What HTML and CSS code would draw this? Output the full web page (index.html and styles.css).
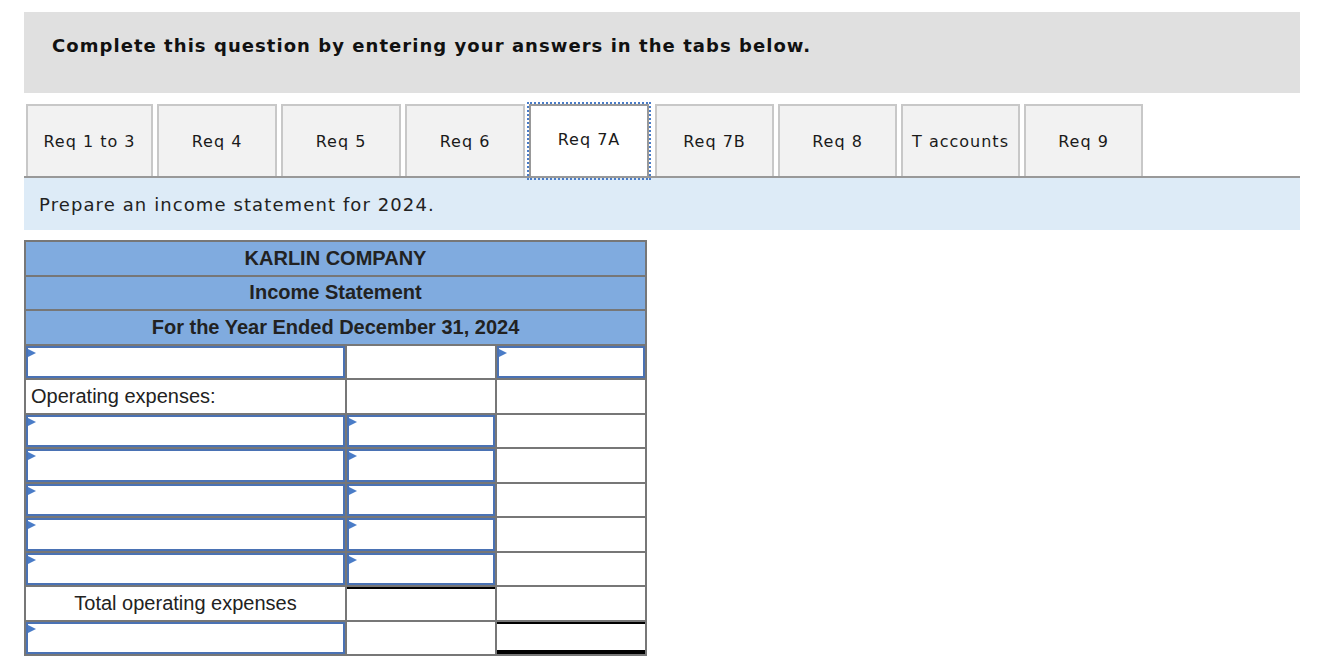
FILE: index.html
```html
<!DOCTYPE html>
<html>
<head>
<meta charset="utf-8">
<link rel="stylesheet" href="styles.css">
</head>
<body>
<div class="page">
  <div class="banner">Complete this question by entering your answers in the tabs below.</div>
  <div class="tabs">
    <div class="tab first">Req 1 to 3</div>
    <div class="tab">Req 4</div>
    <div class="tab">Req 5</div>
    <div class="tab">Req 6</div>
    <div class="tab active">Req 7A</div>
    <div class="tab">Req 7B</div>
    <div class="tab">Req 8</div>
    <div class="tab">T accounts</div>
    <div class="tab">Req 9</div>
  </div>
  <div class="instruction">Prepare an income statement for 2024.</div>
  <div class="sheet">
    <div class="head">KARLIN COMPANY</div>
    <div class="head">Income Statement</div>
    <div class="head">For the Year Ended December 31, 2024</div>

    <div class="cell"><div class="inp"><span class="flag"></span></div></div>
    <div class="cell"></div>
    <div class="cell"><div class="inp"><span class="flag"></span></div></div>

    <div class="cell label">Operating expenses:</div>
    <div class="cell"></div>
    <div class="cell"></div>

    <div class="cell"><div class="inp"><span class="flag"></span></div></div>
    <div class="cell"><div class="inp"><span class="flag"></span></div></div>
    <div class="cell"></div>

    <div class="cell"><div class="inp"><span class="flag"></span></div></div>
    <div class="cell"><div class="inp"><span class="flag"></span></div></div>
    <div class="cell"></div>

    <div class="cell"><div class="inp"><span class="flag"></span></div></div>
    <div class="cell"><div class="inp"><span class="flag"></span></div></div>
    <div class="cell"></div>

    <div class="cell"><div class="inp"><span class="flag"></span></div></div>
    <div class="cell"><div class="inp"><span class="flag"></span></div></div>
    <div class="cell"></div>

    <div class="cell"><div class="inp"><span class="flag"></span></div></div>
    <div class="cell"><div class="inp"><span class="flag"></span></div></div>
    <div class="cell"></div>

    <div class="cell label center">Total operating expenses</div>
    <div class="cell topline"></div>
    <div class="cell"></div>

    <div class="cell"><div class="inp"><span class="flag"></span></div></div>
    <div class="cell"></div>
    <div class="cell topline double"></div>
  </div>
</div>
</body>
</html>
```
FILE: styles.css
```css
html, body {
  margin: 0;
  padding: 0;
  background: #ffffff;
}
.page {
  padding: 12px 32px 0 24px;
  font-family: "DejaVu Sans", Verdana, sans-serif;
  color: #222222;
}
.banner {
  background: #e0e0e0;
  height: 81px;
  box-sizing: border-box;
  padding: 23px 0 0 28px;
  font-weight: bold;
  font-size: 18px;
  letter-spacing: 1.05px;
  color: #111111;
}
.tabs {
  display: flex;
  margin-top: 11px;
  padding-left: 2px;
  border-bottom: 2px solid #999999;
  height: 72px;
  gap: 4px;
}
.tab {
  box-sizing: border-box;
  width: 120px;
  height: 72px;
  padding: 0 6px;
  border: 2px solid #c8c8c8;
  border-bottom: none;
  background: #f2f2f2;
  display: flex;
  align-items: center;
  justify-content: center;
  font-size: 16px;
  letter-spacing: 1px;
  color: #1a1a1a;
  white-space: nowrap;
}
.tab.first {
  width: 127px;
}
.tab.active {
  background: #ffffff;
  border: 2px solid #999999;
  outline: 2px dotted #4a7cc7;
  margin-right: 2px;
  padding-bottom: 4px;
  height: 74px;
  position: relative;
  z-index: 1;
}
.tab.active ~ .tab {
  width: 119px;
}
.instruction {
  background: #ddebf7;
  height: 52px;
  box-sizing: border-box;
  padding: 16px 0 0 15px;
  font-size: 18px;
  letter-spacing: 1.1px;
  color: #222222;
}
.sheet {
  margin-top: 10px;
  width: 623px;
  box-sizing: border-box;
  background: #777777;
  padding: 2px;
  display: grid;
  grid-template-columns: 319px 148px 148px;
  grid-auto-rows: 32.5px;
  gap: 2px;
  font-family: "Liberation Sans", Arial, sans-serif;
  font-size: 20px;
  color: #222222;
}
.head {
  grid-column: 1 / 4;
  background: #80abdf;
  font-weight: bold;
  display: flex;
  align-items: center;
  justify-content: center;
}
.cell {
  background: #ffffff;
  box-sizing: border-box;
  display: flex;
}
.label {
  align-items: center;
  padding-left: 5px;
}
.label.center {
  justify-content: center;
  padding-left: 0;
}
.topline {
  border-top: 2px solid #000000;
}
.double {
  border-bottom: 4px solid #000000;
}
.inp {
  flex: 1;
  border: 2px solid #4a72b4;
  position: relative;
  background: #ffffff;
}
.flag {
  position: absolute;
  left: 0;
  top: 1px;
  width: 0;
  height: 0;
  border-left: 8px solid #4a7cc7;
  border-top: 4px solid transparent;
  border-bottom: 4px solid transparent;
}
```
